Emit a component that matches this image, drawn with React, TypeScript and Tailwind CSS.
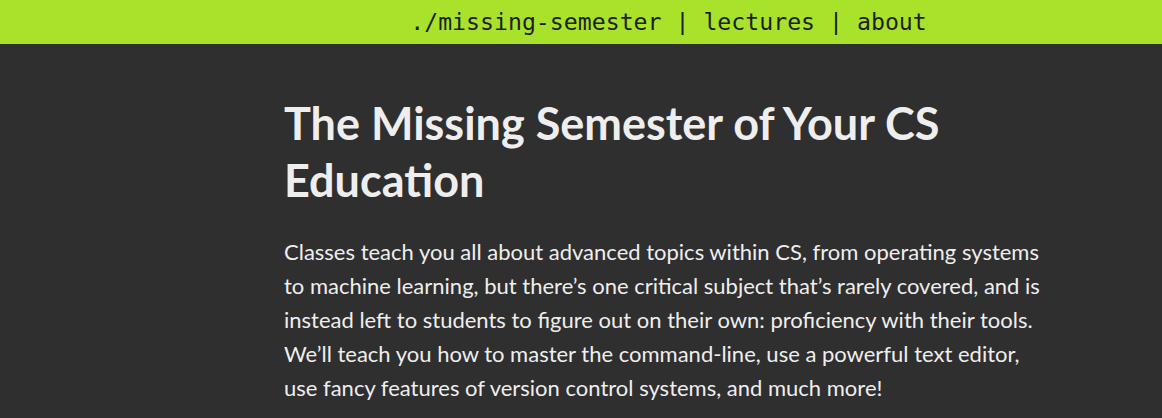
export default function App() {
  return (
    <div className="w-[1162px] h-[418px] overflow-hidden bg-[#2f2f2f]">
      <header className="h-[44px] bg-[#a8e22a] flex items-center justify-center pl-[175px]">
        <nav className="text-[23.2px] text-[#1e1e1e] font-['DejaVu_Sans_Mono',monospace] whitespace-pre leading-none">
          ./missing-semester | lectures | about
        </nav>
      </header>
      <main className="pl-[284px] w-[1052px] pt-[51px] font-['Lato',sans-serif] text-[#eeeeee]">
        <h1 className="text-[45px] font-bold leading-[57px]">The Missing Semester of Your CS Education</h1>
        <p className="mt-[26px] text-[22px] leading-[34px]">
          Classes teach you all about advanced topics within CS, from operating systems to machine learning, but there’s one critical subject that’s rarely covered, and is instead left to students to figure out on their own: proficiency with their tools. We’ll teach you how to master the command-line, use a powerful text editor, use fancy features of version control systems, and much more!
        </p>
      </main>
    </div>
  );
}
